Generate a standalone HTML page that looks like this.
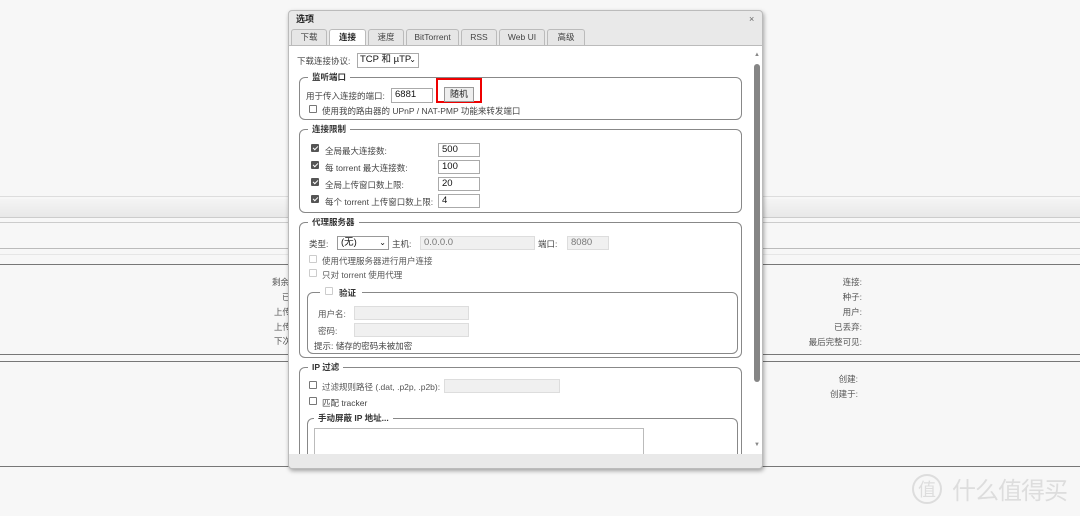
<!DOCTYPE html>
<html><head><meta charset="utf-8"><style>
*{box-sizing:border-box;margin:0;padding:0}
body{width:1080px;height:516px;background:#f7f7f7;position:relative;overflow:hidden;font-family:"Liberation Sans","Noto Sans CJK SC",sans-serif;font-size:9px;color:#333;line-height:10px}
.a{position:absolute}
.hl{position:absolute;left:0;width:1080px}
.lbl{position:absolute;font-size:8.5px;color:#555;text-align:right;white-space:nowrap}
.fs{position:absolute;border:1px solid #888;border-radius:6px}
.lg{position:absolute;top:-6px;background:#fff;padding:0 4px;font-weight:bold;font-size:8.5px;color:#333;line-height:11px}
.t{position:absolute;font-size:8.5px;color:#444;white-space:nowrap;line-height:10px}
.in{position:absolute;height:14px;border:1px solid #aaa;background:#fff;font-size:9.5px;padding-left:3px;line-height:12px;color:#111;white-space:nowrap;overflow:hidden}
.dis{background:#f0f0f0;border-color:#ddd;color:#777}
.cb{position:absolute;width:8px;height:8px;border:1px solid #777;border-radius:1px;background:#fff}
.ck{background:#555;border-color:#555}
.ck::after{content:"";position:absolute;left:2px;top:0px;width:2px;height:4px;border:solid #fff;border-width:0 1px 1px 0;transform:rotate(45deg)}
.cbd{border-color:#ccc}
.tab{position:absolute;top:29px;height:16px;border:1px solid #bbb;border-bottom:none;background:#e6e6e6;font-size:8.5px;color:#444;text-align:center;line-height:15px;border-radius:3px 3px 0 0}
</style></head><body>
<div class="hl" style="top:196px;height:1px;background:#ddd"></div>
<div class="hl" style="top:199px;height:19px;background:linear-gradient(#f4f4f4,#e8e8e8);border-bottom:1px solid #ccc"></div>
<div class="hl" style="top:222px;height:1px;background:#ccc"></div>
<div class="hl" style="top:248px;height:1px;background:#bbb"></div>
<div class="hl" style="top:254px;height:1px;background:#e6e6e6"></div>
<div class="hl" style="top:264px;height:1px;background:#777"></div>
<div class="hl" style="top:354px;height:1px;background:#777"></div>
<div class="hl" style="top:361px;height:1px;background:#777"></div>
<div class="hl" style="top:466px;height:1px;background:#777"></div>
<div class="lbl" style="left:272px;top:277px">剩余</div>
<div class="lbl" style="left:282px;top:292px">已</div>
<div class="lbl" style="left:274px;top:307px">上传</div>
<div class="lbl" style="left:274px;top:322px">上传</div>
<div class="lbl" style="left:274px;top:336px">下次</div>
<div class="lbl" style="right:218px;top:277px">连接:</div>
<div class="lbl" style="right:218px;top:292px">种子:</div>
<div class="lbl" style="right:218px;top:307px">用户:</div>
<div class="lbl" style="right:218px;top:322px">已丢弃:</div>
<div class="lbl" style="right:218px;top:337px">最后完整可见:</div>
<div class="lbl" style="right:222px;top:374px">创建:</div>
<div class="lbl" style="right:222px;top:389px">创建于:</div>
<div class="a" style="left:912px;top:474px;width:30px;height:30px;border:2px solid #ddd;border-radius:50%;color:#ddd;font-size:18px;text-align:center;line-height:26px;font-family:'Noto Sans CJK SC',sans-serif">值</div>
<div class="a" style="left:952px;top:474px;color:#ddd;font-size:24px;font-family:'Noto Sans CJK SC',sans-serif;line-height:30px;letter-spacing:-1px">什么值得买</div>

<div class="a" style="left:288px;top:10px;width:475px;height:459px;background:#e9e9e9;border:1px solid #bbb;border-radius:4px;box-shadow:1px 2px 4px rgba(0,0,0,.35)"></div>
<div class="a" style="left:296px;top:14px;font-weight:bold;font-size:9px;color:#222">选项</div>
<div class="a" style="left:749px;top:14px;font-size:9px;color:#666">×</div>
<div class="tab" style="left:291px;width:36px">下载</div>
<div class="tab" style="left:329px;width:37px;background:#fff;font-weight:bold;color:#222;height:17px">连接</div>
<div class="tab" style="left:368px;width:36px">速度</div>
<div class="tab" style="left:406px;width:53px">BitTorrent</div>
<div class="tab" style="left:461px;width:36px">RSS</div>
<div class="tab" style="left:499px;width:46px">Web UI</div>
<div class="tab" style="left:547px;width:38px">高级</div>
<div class="a" style="left:289px;top:45px;width:473px;height:410px;background:#fff;border-top:1px solid #bbb"></div>
<div class="a" style="left:752px;top:50px;width:10px;height:400px">
<div class="a" style="left:2px;top:0;font-size:6px;color:#888">▲</div>
<div class="a" style="left:2px;top:14px;width:6px;height:318px;background:#858585;border-radius:3px"></div>
<div class="a" style="left:2px;top:390px;font-size:6px;color:#888">▼</div></div>

<div class="t" style="left:297px;top:56px">下载连接协议:</div>
<div class="in" style="left:357px;top:53px;width:62px;height:15px;font-size:9.5px;padding-left:2px">TCP 和 µTP<span style="position:absolute;right:2px;top:0;font-size:8px">⌄</span></div>

<div class="fs" style="left:299px;top:77px;width:443px;height:43px"><div class="lg" style="left:8px">监听端口</div></div>
<div class="t" style="left:306px;top:91px">用于传入连接的端口:</div>
<div class="in" style="left:391px;top:88px;width:42px;height:15px">6881</div>
<div class="a" style="left:436px;top:78px;width:46px;height:25px;border:2px solid #e00"></div>
<div class="a" style="left:444px;top:87px;width:30px;height:15px;border:1px solid #999;background:#eee;font-size:9px;text-align:center;line-height:13px;color:#222">随机</div>
<div class="cb" style="left:309px;top:105px"></div>
<div class="t" style="left:322px;top:106px">使用我的路由器的 UPnP / NAT-PMP 功能来转发端口</div>

<div class="fs" style="left:299px;top:129px;width:443px;height:84px"><div class="lg" style="left:8px">连接限制</div></div>
<div class="cb ck" style="left:311px;top:144px"></div><div class="t" style="left:325px;top:146px">全局最大连接数:</div><div class="in" style="left:438px;top:143px;width:42px">500</div>
<div class="cb ck" style="left:311px;top:161px"></div><div class="t" style="left:325px;top:163px">每 torrent 最大连接数:</div><div class="in" style="left:438px;top:160px;width:42px">100</div>
<div class="cb ck" style="left:311px;top:178px"></div><div class="t" style="left:325px;top:180px">全局上传窗口数上限:</div><div class="in" style="left:438px;top:177px;width:42px">20</div>
<div class="cb ck" style="left:311px;top:195px"></div><div class="t" style="left:325px;top:197px">每个 torrent 上传窗口数上限:</div><div class="in" style="left:438px;top:194px;width:42px">4</div>

<div class="fs" style="left:299px;top:222px;width:443px;height:136px"><div class="lg" style="left:8px">代理服务器</div></div>
<div class="t" style="left:309px;top:239px">类型:</div>
<div class="in" style="left:337px;top:236px;width:52px;border-color:#999">(无)<span style="position:absolute;right:2px;top:0;font-size:8px">⌄</span></div>
<div class="t" style="left:392px;top:239px">主机:</div>
<div class="in dis" style="left:420px;top:236px;width:115px">0.0.0.0</div>
<div class="t" style="left:538px;top:239px">端口:</div>
<div class="in dis" style="left:567px;top:236px;width:42px">8080</div>
<div class="cb cbd" style="left:309px;top:255px"></div><div class="t" style="left:322px;top:256px;color:#555">使用代理服务器进行用户连接</div>
<div class="cb cbd" style="left:309px;top:269px"></div><div class="t" style="left:322px;top:270px;color:#555">只对 torrent 使用代理</div>
<div class="fs" style="left:307px;top:292px;width:431px;height:62px"></div>
<div class="a" style="left:320px;top:286px;background:#fff;width:42px;height:12px"></div>
<div class="cb cbd" style="left:325px;top:287px"></div><div class="t" style="left:339px;top:288px;font-weight:bold;color:#333">验证</div>
<div class="t" style="left:318px;top:309px;color:#555">用户名:</div><div class="in dis" style="left:354px;top:306px;width:115px"></div>
<div class="t" style="left:318px;top:326px;color:#555">密码:</div><div class="in dis" style="left:354px;top:323px;width:115px"></div>
<div class="t" style="left:314px;top:341px">提示: 储存的密码未被加密</div>

<div class="fs" style="left:299px;top:367px;width:443px;height:100px;border-bottom:none"><div class="lg" style="left:8px">IP 过滤</div></div>
<div class="cb" style="left:309px;top:381px"></div><div class="t" style="left:322px;top:382px;color:#555">过滤规则路径 (.dat, .p2p, .p2b):</div>
<div class="in dis" style="left:444px;top:379px;width:116px"></div>
<div class="cb" style="left:309px;top:397px"></div><div class="t" style="left:322px;top:398px">匹配 tracker</div>
<div class="fs" style="left:307px;top:418px;width:431px;height:50px;border-bottom:none"><div class="lg" style="left:6px">手动屏蔽 IP 地址...</div></div>
<div class="a" style="left:314px;top:428px;width:330px;height:30px;border:1px solid #bbb"></div>
<div class="a" style="left:289px;top:454px;width:473px;height:14px;background:#e9e9e9;border-radius:0 0 4px 4px"></div>
</body></html>
